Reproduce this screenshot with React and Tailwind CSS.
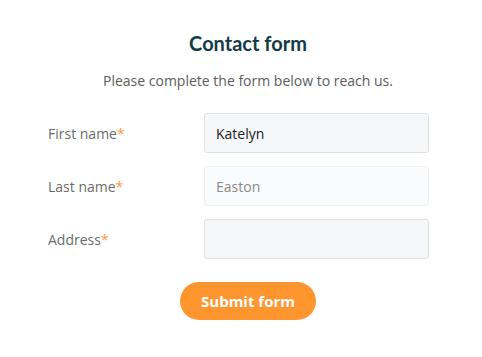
import React from "react";

const rows = [
  { label: "First name", value: "Katelyn", placeholder: "", muted: false },
  { label: "Last name", value: "", placeholder: "Easton", muted: true },
  { label: "Address", value: "", placeholder: "", muted: false },
];

export default function App() {
  const [vals, setVals] = React.useState(rows.map(r => r.value));

  return (
    <div className="w-[482px] h-[357px] bg-white" style={{ fontFamily: "'Open Sans', 'Liberation Sans', sans-serif" }}>
      <div className="pt-[29px] pl-[14px] flex flex-col items-center">
        <h1 className="text-[20px] leading-[28px] font-bold text-[#133a48]" style={{ fontFamily: "Lato, 'Open Sans', sans-serif" }}>
          Contact form
        </h1>
        <p className="mt-[14px] text-[14px] leading-[20px] text-[#5b5b5b]">
          Please complete the form below to reach us.
        </p>
      </div>

      <form className="mt-[22px] pl-[48px] flex flex-col gap-[13px]" onSubmit={e => e.preventDefault()}>
        {rows.map((r, i) => (
          <div key={r.label} className="flex items-center">
            <label className="w-[156px] text-[14px] text-[#6b6b6b]">
              {r.label}<span className="text-[#ff9a3c]">*</span>
            </label>
            <input
              className={
                "w-[225px] h-[40px] rounded-[3px] px-[11px] text-[14px] text-[#1c1c1c] outline-none placeholder:text-[#8a8a8a] " +
                (r.muted ? "bg-[#fafbfc] border border-[#eef0f2]" : "bg-[#f6f7f9] border border-[#dfe1e4]")
              }
              placeholder={r.placeholder}
              value={vals[i]}
              onChange={e => setVals(vals.map((v, j) => (j === i ? e.target.value : v)))}
            />
          </div>
        ))}
        <div className="flex justify-center pr-[34px] mt-[10px]">
          <button
            type="submit"
            className="w-[136px] h-[38px] rounded-full bg-[#ff952e] text-white text-[15px] font-bold"
          >
            Submit form
          </button>
        </div>
      </form>
    </div>
  );
}
